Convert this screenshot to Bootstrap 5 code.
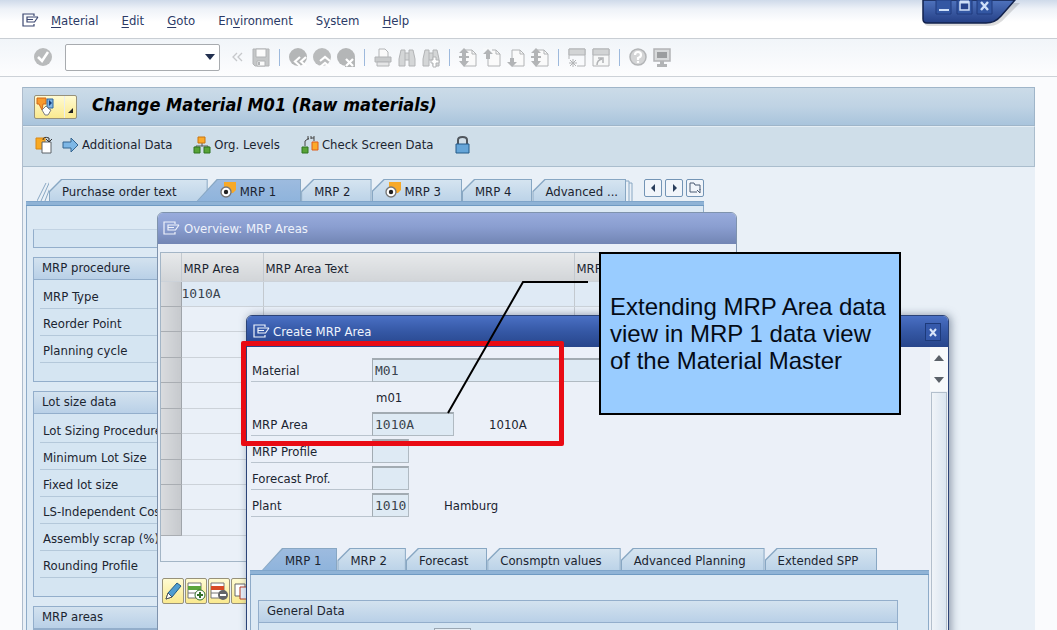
<!DOCTYPE html>
<html lang="en">
<head>
<meta charset="utf-8">
<meta name="viewport" content="width=device-width, initial-scale=1">
<title>Change Material M01 (Raw materials)</title>
<link href="https://cdn.jsdelivr.net/npm/bootstrap@5.3.0/dist/css/bootstrap.min.css" rel="stylesheet">
<style>
  body { font: 13px/20px "DejaVu Sans Condensed", "DejaVu Sans", sans-serif; color: #1b2430; background: #fafbfd; height: 100vh; overflow: hidden; }
  button { font: inherit; color: inherit; border: 0; padding: 0; background: none; }
  svg { display: block; flex: none; }
  .menubar { height: 39px; padding: 3px 22px 0; gap: 23px; border-bottom: 1px solid #c9ced4; background: linear-gradient(#cfdaea, #eef2f8 9px, #fff 22px, #fff); }
  .menubar a { color: #2c3a66; text-decoration: none; }
  .menubar u { text-underline-offset: 2px; }
  .menu-icon { color: #3b4770; }
  .sysbar { height: 38px; padding: 0 33px; gap: 6px; border-bottom: 1px solid #cdd2d8; background: linear-gradient(#f1f5f9, #fdfdfe); color: #b2b4b6; }
  .sysbar .form-select { width: 155px; height: 27px; margin: 0 2px 0 6px; border: 1px solid #a8abaf; border-radius: 2px; box-shadow: none; background: #fff; }
  .combo-arrow { right: 7px; top: 10px; pointer-events: none; }
  .bar-sep { width: 1px; height: 17px; margin: 0 3px; background: #9db9dc; }
  .window-tab { top: 0; right: 37px; }
  .session { margin: 10px 22px 0; border-left: 1px solid #aebccc; background: #e9f0f7; height: calc(100vh - 87px); overflow: hidden; }
  .session::before { content: ""; }
  .titlebar { height: 39px; padding-left: 11px; border: 1px solid #9fb5c9; border-left: 0; background: linear-gradient(#cbdbe8, #bfd3e4 50%, #a9c4dc); }
  .titlebar h1 { font: italic bold 18px/24px "DejaVu Sans Condensed", "DejaVu Sans", sans-serif; margin: 0 0 4px 15px; color: #000; }
  .gold { border: 1px solid #97917a; border-radius: 2px; background: linear-gradient(#fffbd2, #fae98f); }
  .appbar { height: 41px; padding: 0 0 3px 12px; border: 1px solid #aabdcd; border-top-color: #e4edf4; border-left: 0; background: #cfdee9; gap: 21px; }
  .appbar button { gap: 3px; }
  .strip { padding-left: 11px; border-bottom: 1px solid #7fa5ca; }
  .tab { position: relative; height: 22px; padding: 3px 19px 0 13px; clip-path: polygon(12px 0, 100% 0, 100% 100%, 0 100%, 0 12px); background: #88a7c3; z-index: 0; white-space: nowrap; }
  .tab::before { content: ""; position: absolute; inset: 1px 1px 0 1px; z-index: -1; background: linear-gradient(#d5e4f0, #bcd3e8); clip-path: polygon(12px 0, 100% 0, 100% 100%, 0 100%, 0 12px); }
  .tab.on, .tab.on::before { clip-path: polygon(20px 0, 100% 0, 100% 100%, 0 100%); }
  .tab.on { padding: 3px 16px 0 23px; }
  .tab.on::before { background: linear-gradient(#9dbbdf, #8fb4dc); }
  .tab svg { margin-top: -3px; }
  .page-pane .tab { padding-right: 21px; }
  .page-pane .tab.first { padding-right: 31px; }
  .page-pane .tab.on { margin-left: -11px; padding-right: 25px; }
  .page-pane .tab.more { padding-right: 8px; }
  .band { height: 4px; background: #8fb3d6; border-bottom: 1px solid #6f9ac2; }
  .page-pane { width: 67%; margin: 12px 0 0 3px; }
  .pane { border: 1px solid #8eabc8; border-top: 0; background: #dce9f4; }
  .page-pane .pane { padding: 23px 6px 0; height: 500px; }
  .group { border: 1px solid #93aecb; background: #d5e5f2; }
  .page-pane .group { margin-bottom: 9px; }
  .group-head { height: 22px; margin: 0; padding-left: 8px; font-size: 13px; line-height: 20px; font-weight: 400; border-bottom: 1px solid #93aecb; background: linear-gradient(#d3e2ef, #b9d0e7); }
  .lead-box { height: 19px; border-top-color: #c2d3e3; }
  .group ul { padding: 2px 0 18px 6px; }
  .group li { height: 27px; padding: 5px 0 0 3px; border-bottom: 1px solid #b4c8da; }
  .steps { gap: 3px; }
  .step { width: 18px; height: 18px; border: 1px solid #7394b5; border-radius: 2px; background: #f1f5fa; }
  .overview { left: 134px; top: 125px; width: 580px; height: 440px; border: 1px solid #7f93ad; border-radius: 6px 6px 0 0; background: #eaf0f8; overflow: hidden; }
  .overview header { height: 31px; padding-left: 5px; gap: 4px; color: #eef2fb; background: linear-gradient(#98abdc, #8a9ed0 45%, #7285b4); }
  .grid-frame { margin: 8px 0 0 2px; border: 1px solid #a3b5c6; height: 310px; }
  .grid-table { width: 100%; height: 283px; table-layout: fixed; border-collapse: collapse; }
  .grid-table td { height: 25px; padding: 0; }
  .grid-table th { height: 28px; padding: 4px 0 0 2px; background: linear-gradient(#e7e9eb, #d2d5d8); font-weight: 400; }
  .grid-table th, .grid-table td { line-height: 18px; border-right: 1px solid #c3c9cf; border-bottom: 1px solid #ccd2d9; white-space: nowrap; }
  .grid-table .sel { background: linear-gradient(90deg, #d9dbde, #c6c9cd); border-right-color: #9fa4aa; border-bottom-color: #a9adb2; }
  .picked td { background: #dfeaf5; }
  .mono { font-family: "DejaVu Sans Mono", monospace; color: #3a444e; }
  .tools { gap: 1px; }
  .tool { width: 22px; height: 26px; }
  .create { left: 223px; top: 228px; width: 703px; height: 340px; border: 1px solid #2b4377; border-radius: 6px 6px 0 0; background: #ebf0f8; box-shadow: 2px 0 9px #4a5a7499; }
  .create header { height: 31px; padding: 0 7px 0 6px; gap: 3px; color: #eef3fc; border-radius: 5px 5px 0 0; background: linear-gradient(#4a70c4, #3558a5 50%, #27458b); }
  .close-x { width: 16px; height: 18px; margin-left: auto; border: 1px solid #1d3a7a; background: #3559ab; }
  .fields { padding: 11px 0 0 4px; width: 370px; }
  .field { height: 27px; }
  .field label { width: 121px; height: 24px; padding: 3px 0 0 1px; border-bottom: 1px solid #bac4ce; flex: none; }
  .field .blank { width: 121px; flex: none; }
  .field input { height: 24px; padding: 0 2px; border: 1px solid #b0bac2; border-top: 2px solid #a2abb2; border-left-color: #a2abb2; background: #deeaf4; flex: none; }
  .field .note { padding: 3px 0 0 35px; }
  .field .under { padding: 3px 0 0 4px; }
  .w-code { width: 37px; } .w-area { width: 82px; } .w-long { width: 330px; }
  .scroller { right: 0; top: 31px; bottom: 0; width: 18px; background: #eef2f7; }
  .scroller button { width: 18px; height: 22px; background: #f7f9fb; }
  .thumb { margin: 1px 1px 0; border: 1px solid #b3bfcc; border-bottom: 0; background: linear-gradient(90deg, #f0f4f8, #dae5f0); }
  .create .tabs-area { margin: 28px 19px 0 3px; }
  .create .strip { padding-left: 12px; }
  .create .pane { height: 66px; padding: 25px 30px 0 7px; }
  .create .group { height: 50px; overflow: hidden; }
  .create .group input { width: 37px; margin: 5px 0 0 175px; border: 1px solid #9aa7b3; background: #e6edf3; }
  .marker { left: 241px; top: 341px; width: 323px; height: 105px; border: 5px solid #e90b14; border-radius: 2px; pointer-events: none; }
  .leader { left: 440px; top: 275px; }
  .callout { left: 599px; top: 252px; width: 302px; height: 163px; padding: 0 9px; border: 2px solid #000; background: #99ccff; color: #050b16; font: 24px/27px "Liberation Sans", Arial, sans-serif; }
</style>
<script src="https://cdn.jsdelivr.net/npm/bootstrap@5.3.0/dist/js/bootstrap.bundle.min.js"></script>
</head>
<body>
<svg width="0" height="0" class="position-absolute" aria-hidden="true">
  <defs>
    <symbol id="menu" viewBox="0 0 17 15"><path d="M12 3V1H1v12h11v-2M16 4H5v5h7.500L16 4M5 6.500h6" fill="none" stroke="currentColor" stroke-width="1.2"/></symbol>
    <symbol id="sheet" viewBox="0 0 18 20"><path d="M5 2h8l4 4v12H5z" fill="#fafafa" stroke="currentColor"/><path d="M13 2v4h4" fill="none" stroke="currentColor"/></symbol>
    <symbol id="up" viewBox="0 0 10 10"><path d="M5 0l5 5H7v5H3V5H0z" fill="currentColor"/></symbol>
    <symbol id="ring" viewBox="0 0 16 18"><path d="M4 1h12v8l-3 3H4z" fill="#f7a928"/><circle cx="6" cy="11" r="5" fill="#fff" stroke="#777" stroke-width="1.4"/><circle cx="6" cy="11" r="2.2" fill="#222"/></symbol>
    <symbol id="binoc" viewBox="0 0 18 20"><path d="M3 2h4v3h4V2h4l2 9v7h-6v-6H7v6H1v-7z" fill="#d4d6d7" stroke="currentColor"/><path d="M7 5v7M11 5v7" stroke="currentColor"/></symbol>
  </defs>
</svg>

<nav class="menubar d-flex align-items-center" aria-label="Menu">
  <div class="d-flex align-items-center"><svg width="17" height="15" class="menu-icon me-2"><use href="#menu"/></svg>
  <a class="ps-1" href="#"><u>M</u>aterial</a></div>
  <a href="#"><u>E</u>dit</a><a href="#"><u>G</u>oto</a><a href="#">En<u>v</u>ironment</a><a href="#">S<u>y</u>stem</a><a href="#"><u>H</u>elp</a>
</nav>

<div class="sysbar d-flex align-items-center">
  <button aria-label="Enter"><svg width="20" height="20"><circle cx="10" cy="9" r="9" fill="#b9bbbc"/><path d="M5 9l4 4 6-9" fill="none" stroke="#fff" stroke-width="2.5"/></svg></button>
  <div class="position-relative">
    <select class="form-select" aria-label="Command"><option></option></select>
    <svg class="combo-arrow position-absolute" width="11" height="7"><path d="M1 0h10L6 6z" fill="#22304f"/></svg>
  </div>
  <button aria-label="Collapse"><svg width="18" height="20"><path d="M9 5l-4 4 4 4M14 5l-4 4 4 4" fill="none" stroke="#c6c8cb" stroke-width="1.3"/></svg></button>
  <button aria-label="Save"><svg width="18" height="20"><path d="M1 1h16v17H3l-2-2z" fill="#c5c7c8" stroke="currentColor"/><path d="M4 1h10v8H4zM5 13h8v5H5z" fill="#fbfbfb" stroke="currentColor"/><path d="M7 14v3" stroke="currentColor" stroke-width="2"/></svg></button>
  <span class="bar-sep"></span>
  <button aria-label="Back"><svg width="18" height="20"><circle cx="9" cy="9" r="9" fill="#b4b6b7"/><path d="M11 9l-5 4.500 5 4.500M17 9l-5 4.500 5 4.500" fill="none" stroke="#fff" stroke-width="2.200"/></svg></button>
  <button aria-label="Exit"><svg width="18" height="20"><circle cx="9" cy="9" r="9" fill="#b9bbbc"/><path d="M7 13l5-4 5 4M7 19l5-4 5 4" fill="none" stroke="#fff" stroke-width="2.200"/></svg></button>
  <button aria-label="Cancel"><svg width="18" height="20"><circle cx="9" cy="9" r="9" fill="#b4b6b7"/><path d="M8 10h10v9H8z" fill="#b4b6b7"/><path d="M9 11l7 7M16 11l-7 7" stroke="#fff" stroke-width="2.300"/></svg></button>
  <span class="bar-sep"></span>
  <button aria-label="Print"><svg width="18" height="20"><path d="M5 9V1h6l3 3v5" fill="#fafafa" stroke="currentColor"/><path d="M1 9h16v5H1z" fill="#c9cbcc" stroke="currentColor"/><path d="M3 14h12v4H3z" fill="#e4e5e6" stroke="currentColor"/></svg></button>
  <button aria-label="Find"><svg width="18" height="20"><use href="#binoc"/></svg></button>
  <button aria-label="Find next"><svg width="18" height="20"><use href="#binoc"/><path d="M11 9h3v3h3v3h-3v4h-3v-4H9v-3h2z" fill="#fff" stroke="currentColor"/></svg></button>
  <span class="bar-sep"></span>
  <button aria-label="First page"><svg width="18" height="20"><use href="#sheet"/><path d="M5 0l5 5H7v3h3v2H7v3h3l-5 6-5-6h3v-3H0V8h3V5H0z" fill="currentColor"/></svg></button>
  <button aria-label="Previous page"><svg width="18" height="20"><use href="#sheet"/><path d="M0 0h9v10H0z" fill="#f7f9fb"/><use href="#up" width="10" height="10" y="1"/></svg></button>
  <button aria-label="Next page"><svg width="18" height="20"><use href="#sheet"/><path d="M3 10h4v4h3l-5 5-5-5h3z" fill="currentColor"/></svg></button>
  <button aria-label="Last page"><svg width="18" height="20"><use href="#sheet"/><path d="M5 0l5 5H7v3h3v2H7v3h3l-5 6-5-6h3v-3H0V8h3V5H0z" fill="currentColor"/></svg></button>
  <span class="bar-sep"></span>
  <button aria-label="New session"><svg width="18" height="20"><path d="M1 1h16v17H9M1 1v10" fill="none" stroke="currentColor"/><path d="M1 1h16v6H1z" fill="#d2d4d5" stroke="currentColor"/><path d="M5 11v8M1 15h8M2 12l6 6M8 12l-6 6" stroke="currentColor"/></svg></button>
  <button aria-label="Shortcut"><svg width="18" height="20"><path d="M1 1h16v17H1z" fill="#f7f8f8" stroke="currentColor"/><path d="M1 1h16v6H1z" fill="#d2d4d5" stroke="currentColor"/><path d="M5 17q0-5 5-6M6 10h5v5" fill="none" stroke="currentColor" stroke-width="1.500"/></svg></button>
  <span class="bar-sep"></span>
  <button aria-label="Help"><svg width="18" height="20"><circle cx="9" cy="9" r="8" fill="#d4d5d6" stroke="currentColor" stroke-width="1.500"/><path d="M6 7q0-3 3-3t3 3q0 2-3 3v2M9 13v2" fill="none" stroke="#fff" stroke-width="2.200"/></svg></button>
  <button aria-label="Layout"><svg width="18" height="20"><path d="M1 1h16v12H1z" fill="#d8dadb" stroke="currentColor" stroke-width="1.500"/><path d="M4 4h10v6H4z" fill="#9b9d9f"/><path d="M7 13h4v3h3v3H4v-3h3z" fill="currentColor"/></svg></button>
</div>

<svg class="window-tab position-absolute" width="102" height="28" aria-label="Window controls">
  <defs><linearGradient id="wb" x2="0" y2="1"><stop stop-color="#4f73be"/><stop offset="1" stop-color="#243f85"/></linearGradient></defs>
  <path d="M6 3v18q0 5 5 5h60q10 0 17-9L102 3z" fill="#00000022"/>
  <path d="M5 0v19q0 4 4 4h59q9 0 15-7L97 0z" fill="url(#wb)" stroke="#12224d" stroke-width="1.500"/>
  <path d="M18 0h15v14H18zM39 0h15v14H39zM59 0h15v14H59z" fill="#3357a3" stroke="#203b7c"/>
  <path d="M21 10h10" stroke="#cfe0f8" stroke-width="2"/>
  <path d="M42 2h9v8h-9z" fill="#27448c" stroke="#cfe0f8" stroke-width="1.500"/><path d="M42 2h9" stroke="#cfe0f8" stroke-width="3"/>
  <path d="M63 2l7 8M70 2l-7 8" stroke="#cfe0f8" stroke-width="2.400"/>
</svg>

<main class="session position-relative">
  <div class="titlebar d-flex align-items-center">
    <div class="gold d-flex align-items-center">
      <button aria-label="Object services"><svg width="29" height="22"><path d="M2 2h9v6H8l-1 6-3-6H2z" fill="#f79a2c" stroke="#d0661a"/><path d="M12 3h6v9h-6z" fill="#7fb4e4" stroke="#2c659f"/><path d="M14 4l3 3-3 3z" fill="#173c78"/><path d="M7 14l4-4 3 3 2 1-3 5-3 0z" fill="#fff" stroke="#7c7d80"/></svg></button>
      <button class="border-start border-secondary-subtle" aria-label="More services"><svg width="11" height="22"><path d="M8 12v5H3z" fill="#222"/></svg></button>
    </div>
    <h1>Change Material M01 (Raw materials)</h1>
  </div>
  <div class="appbar d-flex align-items-center">
    <div class="d-flex align-items-center gap-2">
      <button aria-label="Other material"><svg width="18" height="20"><path d="M1 3h9v11H1z" fill="#f8aa24" stroke="#d98712"/><path d="M7 7h9v11H7z" fill="#fff" stroke="#5d6268"/><path d="M8 5q0-4 6-2v3M11 4l3 3 3-3" fill="none" stroke="#333"/></svg></button>
      <button class="d-flex align-items-center"><svg width="18" height="16"><path d="M2 5h8V1l7 7-7 7v-4H2z" fill="#7db7e6" stroke="#34658f"/></svg>Additional Data</button>
    </div>
    <button class="d-flex align-items-center"><svg width="18" height="18"><path d="M9 7v3M3 12v-2h12v2" fill="none" stroke="#555"/><path d="M5 1h7v6H5z" fill="#fbaa2a" stroke="#c9740e"/><path d="M1 11h6v6H1zM11 11h6v6h-6z" fill="#58a337" stroke="#2f7421"/></svg>Org. Levels</button>
    <button class="d-flex align-items-center"><svg width="18" height="20"><path d="M1 12h6v6H1z" fill="#58a337" stroke="#2f7421"/><path d="M11 7h6v8h-6z" fill="#fbaa2a" stroke="#e05c1a"/><path d="M4 11V6l4-3M7 1v4M10 4V1M13 1v5M10 3h3" fill="none" stroke="#444"/></svg>Check Screen Data</button>
    <button aria-label="Lock"><svg width="17" height="20"><path d="M4 10V5q0-3 4.500-3t4.500 3v5" fill="none" stroke="#50565d" stroke-width="2"/><path d="M2 9h13v9H2z" fill="#65a5d8" stroke="#255a88"/></svg></button>
  </div>

  <section class="page-pane">
    <div class="strip d-flex" role="tablist">
      <svg width="12" height="22" class="me-n1"><path d="M0 22L9 4M4 22L13 2M8 22L16 1" stroke="#88a7c3" fill="none"/></svg>
      <button class="tab first" role="tab">Purchase order text</button>
      <button class="tab on d-flex align-items-center gap-1" role="tab"><svg width="16" height="18"><use href="#ring"/></svg>MRP 1</button>
      <button class="tab" role="tab">MRP 2</button>
      <button class="tab d-flex align-items-center gap-1" role="tab"><svg width="16" height="18"><use href="#ring"/></svg>MRP 3</button>
      <button class="tab" role="tab">MRP 4</button>
      <button class="tab more" role="tab">Advanced ...</button>
      <svg width="8" height="22"><path d="M0 2h3v20M3 4h3v18" fill="none" stroke="#88a7c3"/></svg>
      <div class="steps d-flex ms-auto">
        <button class="step" aria-label="Previous tab"><svg width="16" height="16"><path d="M10 4v8L6 8z" fill="#2b3e5c"/></svg></button>
        <button class="step" aria-label="Next tab"><svg width="16" height="16"><path d="M7 4v8l4-4z" fill="#2b3e5c"/></svg></button>
        <button class="step" aria-label="Tab list"><svg width="16" height="16"><path d="M10 12H3V3h4l1 2h5v5M10 10l3 3v-4" fill="none" stroke="#4a5a72"/></svg></button>
      </div>
    </div>
    <div class="band"></div>
    <div class="pane">
      <div class="group lead-box"></div>
      <div class="group"><h2 class="group-head">MRP procedure</h2>
        <ul class="list-unstyled m-0"><li>MRP Type</li><li>Reorder Point</li><li>Planning cycle</li></ul></div>
      <div class="group"><h2 class="group-head">Lot size data</h2>
        <ul class="list-unstyled m-0"><li>Lot Sizing Procedure</li><li>Minimum Lot Size</li><li>Fixed lot size</li><li>LS-Independent Costs</li><li>Assembly scrap (%)</li><li>Rounding Profile</li></ul></div>
      <div class="group"><h2 class="group-head">MRP areas</h2></div>
    </div>
  </section>

  <section class="overview position-absolute" aria-label="Overview: MRP Areas">
    <header class="d-flex align-items-center"><svg width="17" height="15"><use href="#menu"/></svg>Overview: MRP Areas</header>
    <div class="grid-frame">
      <table class="grid-table">
        <colgroup><col style="width:20px"><col style="width:82px"><col style="width:311px"><col></colgroup>
        <thead><tr><th></th><th>MRP Area</th><th>MRP Area Text</th><th>MRP</th></tr></thead>
        <tbody>
          <tr class="picked"><td class="sel"></td><td class="mono">1010A</td><td></td><td></td></tr>
          <tr><td class="sel"></td><td></td><td></td><td></td></tr>
          <tr><td class="sel"></td><td></td><td></td><td></td></tr>
          <tr><td class="sel"></td><td></td><td></td><td></td></tr>
          <tr><td class="sel"></td><td></td><td></td><td></td></tr>
          <tr><td class="sel"></td><td></td><td></td><td></td></tr>
          <tr><td class="sel"></td><td></td><td></td><td></td></tr>
          <tr><td class="sel"></td><td></td><td></td><td></td></tr>
          <tr><td class="sel"></td><td></td><td></td><td></td></tr>
          <tr><td class="sel"></td><td></td><td></td><td></td></tr>
        </tbody>
      </table>
    </div>
    <div class="tools d-flex mt-3 ms-1">
      <button class="tool gold" aria-label="Edit"><svg width="20" height="24"><path d="M3 20l2-6L14 4l4 3-9 11z" fill="#4f9dd1" stroke="#245b86"/><path d="M3 20l2-6 4 4z" fill="#fff" stroke="#555"/></svg></button>
      <button class="tool gold" aria-label="Add row"><svg width="20" height="24"><path d="M2 4h13v15H2z" fill="#fff" stroke="#777"/><path d="M2 7h13v4H2z" fill="#5ba53c"/><path d="M2 14h9" stroke="#777"/><circle cx="14" cy="16" r="5" fill="#fff" stroke="#33702a"/><path d="M14 13v6M11 16h6" stroke="#33702a" stroke-width="2"/></svg></button>
      <button class="tool gold" aria-label="Delete row"><svg width="20" height="24"><path d="M2 4h13v15H2z" fill="#fff" stroke="#777"/><path d="M2 7h13v4H2z" fill="#d84a26"/><path d="M2 14h9" stroke="#777"/><circle cx="14" cy="16" r="5" fill="#626468"/><path d="M11 16h6" stroke="#fff" stroke-width="2"/></svg></button>
      <button class="tool gold" aria-label="Copy row"><svg width="20" height="24"><path d="M3 5h10v12H3z" fill="#fff" stroke="#666"/><path d="M8 8h10v12H8z" fill="#e8eef8" stroke="#b93822"/></svg></button>
    </div>
  </section>

  <section class="create position-absolute" aria-label="Create MRP Area">
    <header class="d-flex align-items-center"><svg width="17" height="15"><use href="#menu"/></svg>Create MRP Area
      <button class="close-x" aria-label="Close"><svg width="14" height="16"><path d="M4 5l6 7M10 5l-6 7" stroke="#dbe7fa" stroke-width="2"/></svg></button></header>
    <form class="fields">
      <div class="field d-flex"><label for="mat">Material</label><input id="mat" class="mono w-long" value="M01"></div>
      <div class="field d-flex"><span class="blank"></span><span class="under">m01</span></div>
      <div class="field d-flex"><label for="area">MRP Area</label><input id="area" class="mono w-area" value="1010A"><span class="note">1010A</span></div>
      <div class="field d-flex"><label for="prof">MRP Profile</label><input id="prof" class="mono w-code"></div>
      <div class="field d-flex"><label for="fore">Forecast Prof.</label><input id="fore" class="mono w-code"></div>
      <div class="field d-flex"><label for="plant">Plant</label><input id="plant" class="mono w-code" value="1010"><span class="note">Hamburg</span></div>
    </form>
    <div class="tabs-area">
      <div class="strip d-flex" role="tablist">
        <button class="tab on" role="tab">MRP 1</button><button class="tab" role="tab">MRP 2</button><button class="tab" role="tab">Forecast</button><button class="tab" role="tab">Consmptn values</button><button class="tab" role="tab">Advanced Planning</button><button class="tab" role="tab">Extended SPP</button>
      </div>
      <div class="band"></div>
      <div class="pane"><div class="group"><h2 class="group-head">General Data</h2><input aria-label="General data value"></div></div>
    </div>
    <div class="scroller position-absolute d-flex flex-column">
      <button aria-label="Scroll up"><svg width="18" height="22"><path d="M9 8l5 6H4z" fill="#5b6168"/></svg></button>
      <button aria-label="Scroll down"><svg width="18" height="22"><path d="M9 14l5-6H4z" fill="#5b6168"/></svg></button>
      <div class="thumb flex-grow-1"></div>
    </div>
  </section>
</main>

<div class="marker position-absolute"></div>
<aside class="callout position-absolute d-flex align-items-center">Extending MRP Area data view in MRP 1 data view of the Material Master</aside>
<svg class="leader position-absolute" width="150" height="140"><path d="M148 7H83L8 138" fill="none" stroke="#000" stroke-width="2"/></svg>
</body>
</html>
